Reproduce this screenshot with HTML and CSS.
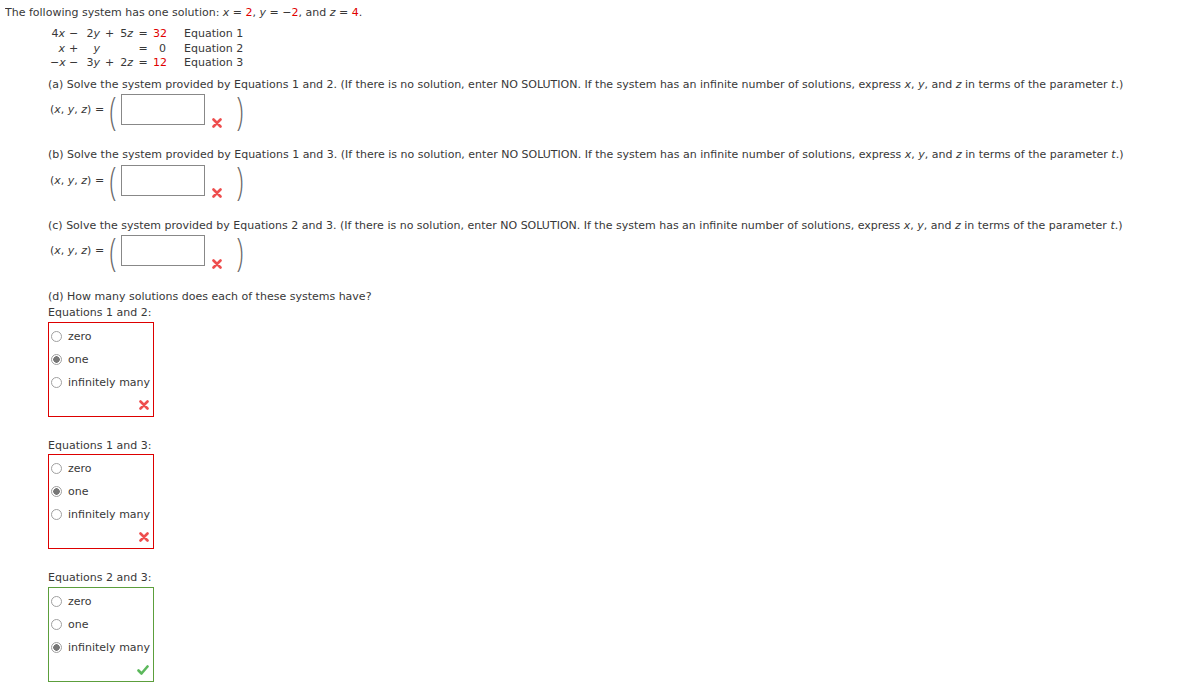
FILE: index.html
```html
<!DOCTYPE html>
<html lang="en">
<head>
  <meta charset="UTF-8">
  <title>System of Equations</title>
  <link rel="stylesheet" href="styles.css">
</head>
<body>

<p class="intro">The following system has one solution: <i>x</i> = <span class="val">2</span>, <i>y</i> = &minus;<span class="val">2</span>, and <i>z</i> = <span class="val">4</span>.</p>

<div class="system">
  <span class="t">4<i>x</i></span><span class="op">&minus;</span><span class="t">2<i>y</i></span><span class="op">+</span><span class="t">5<i>z</i></span><span class="op">=</span><span class="t val">32</span><span class="lbl">Equation 1</span>
  <span class="t"><i>x</i></span><span class="op">+</span><span class="t"><i>y</i></span><span class="op"></span><span class="t"></span><span class="op">=</span><span class="t">0</span><span class="lbl">Equation 2</span>
  <span class="t">&minus;<i>x</i></span><span class="op">&minus;</span><span class="t">3<i>y</i></span><span class="op">+</span><span class="t">2<i>z</i></span><span class="op">=</span><span class="t val">12</span><span class="lbl">Equation 3</span>
</div>

<div class="part">
  <p class="prompt">(a) Solve the system provided by Equations 1 and 2. (If there is no solution, enter NO SOLUTION. If the system has an infinite number of solutions, express <i>x</i>, <i>y</i>, and <i>z</i> in terms of the parameter <i>t</i>.)</p>
  <div class="answer">
    <span class="lhs">(<i>x</i>, <i>y</i>, <i>z</i>) =</span>
    <span class="paren">(</span>
    <span class="field"></span>
    <span class="mark"><svg width="10" height="10" viewBox="0 0 10 10"><path d="M1.5 1.5 L8.5 8.5 M8.5 1.5 L1.5 8.5" stroke="#ee4e4e" stroke-width="2.6" stroke-linecap="round"/></svg></span>
    <span class="paren">)</span>
  </div>
</div>

<div class="part">
  <p class="prompt">(b) Solve the system provided by Equations 1 and 3. (If there is no solution, enter NO SOLUTION. If the system has an infinite number of solutions, express <i>x</i>, <i>y</i>, and <i>z</i> in terms of the parameter <i>t</i>.)</p>
  <div class="answer">
    <span class="lhs">(<i>x</i>, <i>y</i>, <i>z</i>) =</span>
    <span class="paren">(</span>
    <span class="field"></span>
    <span class="mark"><svg width="10" height="10" viewBox="0 0 10 10"><path d="M1.5 1.5 L8.5 8.5 M8.5 1.5 L1.5 8.5" stroke="#ee4e4e" stroke-width="2.6" stroke-linecap="round"/></svg></span>
    <span class="paren">)</span>
  </div>
</div>

<div class="part">
  <p class="prompt">(c) Solve the system provided by Equations 2 and 3. (If there is no solution, enter NO SOLUTION. If the system has an infinite number of solutions, express <i>x</i>, <i>y</i>, and <i>z</i> in terms of the parameter <i>t</i>.)</p>
  <div class="answer">
    <span class="lhs">(<i>x</i>, <i>y</i>, <i>z</i>) =</span>
    <span class="paren">(</span>
    <span class="field"></span>
    <span class="mark"><svg width="10" height="10" viewBox="0 0 10 10"><path d="M1.5 1.5 L8.5 8.5 M8.5 1.5 L1.5 8.5" stroke="#ee4e4e" stroke-width="2.6" stroke-linecap="round"/></svg></span>
    <span class="paren">)</span>
  </div>
</div>

<div class="part-d">
  <p class="prompt">(d) How many solutions does each of these systems have?</p>

  <p class="sub">Equations 1 and 2:</p>
  <div class="choices wrong">
    <div class="opt"><span class="radio"></span>zero</div>
    <div class="opt"><span class="radio on"></span>one</div>
    <div class="opt"><span class="radio"></span>infinitely many</div>
    <div class="status"><svg width="10" height="10" viewBox="0 0 10 10"><path d="M1.5 1.5 L8.5 8.5 M8.5 1.5 L1.5 8.5" stroke="#ee4e4e" stroke-width="2.6" stroke-linecap="round"/></svg></div>
  </div>

  <p class="sub">Equations 1 and 3:</p>
  <div class="choices wrong">
    <div class="opt"><span class="radio"></span>zero</div>
    <div class="opt"><span class="radio on"></span>one</div>
    <div class="opt"><span class="radio"></span>infinitely many</div>
    <div class="status"><svg width="10" height="10" viewBox="0 0 10 10"><path d="M1.5 1.5 L8.5 8.5 M8.5 1.5 L1.5 8.5" stroke="#ee4e4e" stroke-width="2.6" stroke-linecap="round"/></svg></div>
  </div>

  <p class="sub">Equations 2 and 3:</p>
  <div class="choices right">
    <div class="opt"><span class="radio"></span>zero</div>
    <div class="opt"><span class="radio"></span>one</div>
    <div class="opt"><span class="radio on"></span>infinitely many</div>
    <div class="status"><svg width="12" height="10" viewBox="0 0 12 10"><path d="M1.5 5.5 L4.5 8.5 L10.5 1.5" fill="none" stroke="#5cb85c" stroke-width="2.6" stroke-linecap="round" stroke-linejoin="round"/></svg></div>
  </div>
</div>

</body>
</html>
```

FILE: styles.css
```css
body {
  margin: 5px;
  font-family: 'DejaVu Sans', Verdana, sans-serif;
  font-size: 11px;
  line-height: 15px;
  color: #383838;
  background: #fff;
}

p {
  margin: 0;
}

.val {
  color: #e00000;
}

.system {
  display: grid;
  grid-template-columns: 15px 17px 18px 19px 14px 20px 13px auto;
  grid-auto-rows: 14.5px;
  line-height: 14.5px;
  margin: 7px 0 0 45px;
  width: 260px;
}

.system .t {
  text-align: right;
  white-space: nowrap;
}

.system .op {
  text-align: center;
}

.system .lbl {
  padding-left: 18px;
  white-space: nowrap;
}

.part {
  margin-left: 43px;
}

.part .prompt {
  margin-top: 6px;
}

.part + .part .prompt {
  margin-top: 19.5px;
}

.answer {
  display: flex;
  align-items: center;
  height: 36px;
  padding-left: 2px;
}

.lhs {
  margin-right: 5px;
}

.paren {
  font-family: 'Open Sans', 'DejaVu Sans', sans-serif;
  font-weight: 300;
  font-size: 28px;
  line-height: 22px;
  color: #666;
  display: inline-block;
  transform: scale(0.9, 1.35);
}

.field {
  width: 82px;
  height: 29px;
  border: 1px solid #888;
  margin-left: 4px;
}

.mark {
  align-self: flex-end;
  margin: 0 14px 0 7px;
  line-height: 0;
}

.part-d {
  margin-left: 43px;
  margin-top: 20.5px;
}

.sub {
  margin-top: 1px;
}

.choices {
  width: 104px;
  height: 93px;
  margin-top: 1.5px;
  margin-bottom: 21px;
  border: 1px solid #d00;
}

.choices.right {
  border-color: #5c9e3c;
}

.opt {
  display: flex;
  align-items: center;
  height: 23px;
  padding-left: 2px;
  white-space: nowrap;
}

.opt:first-child {
  margin-top: 2px;
}

.radio {
  width: 9px;
  height: 9px;
  border: 1px solid #a0a0a0;
  border-radius: 50%;
  margin-right: 6px;
  background: #fff;
}

.radio.on {
  background: radial-gradient(circle, #777 0 3px, #fff 3.5px);
}

.status {
  display: flex;
  justify-content: flex-end;
  padding-right: 4px;
  margin-top: 6px;
  line-height: 0;
}
```
